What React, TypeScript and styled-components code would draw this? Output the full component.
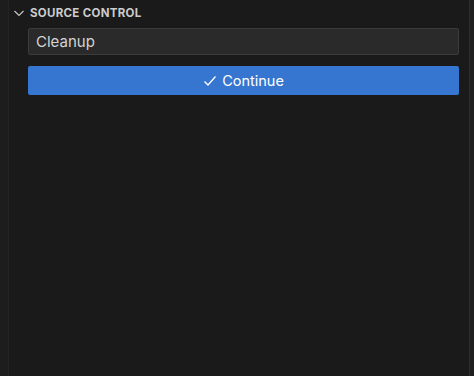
import React from "react";
import styled, { createGlobalStyle } from "styled-components";

const Global = createGlobalStyle`
  html, body { margin: 0; padding: 0; background: #1a1a1a; }
  body { font-family: "Inter", "Liberation Sans", sans-serif; -webkit-font-smoothing: antialiased; }
  #root { height: 376px; }
`;

const Frame = styled.div`
  display: flex;
  width: 474px;
  height: 376px;
  overflow: hidden;
  background: #1a1a1a;
`;

const Gutter = styled.div`
  width: 8px;
  background: #1d1d1d;
  border-right: 1px solid #242424;
`;

const Panel = styled.div`
  flex: 1;
  display: flex;
  flex-direction: column;
  background: #1a1a1a;
  border-right: 1px solid #2e2e2e;
`;

const Edge = styled.div`
  width: 4px;
  background: #1f1f1f;
`;

const Header = styled.div`
  display: flex;
  align-items: center;
  height: 26px;
  padding-left: 2px;
  gap: 3px;
  color: #cccccc;
  font-size: 11.5px;
  font-weight: 700;
  letter-spacing: 0.3px;
`;

const Body = styled.div`
  display: flex;
  flex-direction: column;
  gap: 11px;
  padding: 2px 10px 0 19px;
`;

const Input = styled.div`
  box-sizing: border-box;
  height: 27px;
  display: flex;
  align-items: center;
  padding: 0 7px;
  background: #2a2a2a;
  border: 1px solid #3b3b3b;
  border-radius: 2px;
  color: #d4d4d4;
  font-size: 15px;
`;

const Button = styled.button`
  box-sizing: border-box;
  height: 29px;
  display: flex;
  align-items: center;
  justify-content: center;
  gap: 5px;
  border: none;
  border-radius: 2px;
  background: #3676d1;
  color: #ffffff;
  font-family: inherit;
  font-size: 14.5px;
  padding: 0;
`;

function Chevron() {
  return (
    <svg width="16" height="16" viewBox="0 0 16 16" fill="none">
      <path d="M3.5 6L8 10.5L12.5 6" stroke="#c5c5c5" strokeWidth="1.2" />
    </svg>
  );
}

function Check() {
  return (
    <svg width="14" height="14" viewBox="0 0 14 14" fill="none">
      <path d="M1.5 7.5L5 11L12.5 2.5" stroke="#ffffff" strokeWidth="1.3" />
    </svg>
  );
}

export default function App() {
  return (
    <Frame>
      <Global />
      <Gutter />
      <Panel>
        <Header>
          <Chevron />
          <span>SOURCE CONTROL</span>
        </Header>
        <Body>
          <Input>Cleanup</Input>
          <Button>
            <Check />
            Continue
          </Button>
        </Body>
      </Panel>
      <Edge />
    </Frame>
  );
}
